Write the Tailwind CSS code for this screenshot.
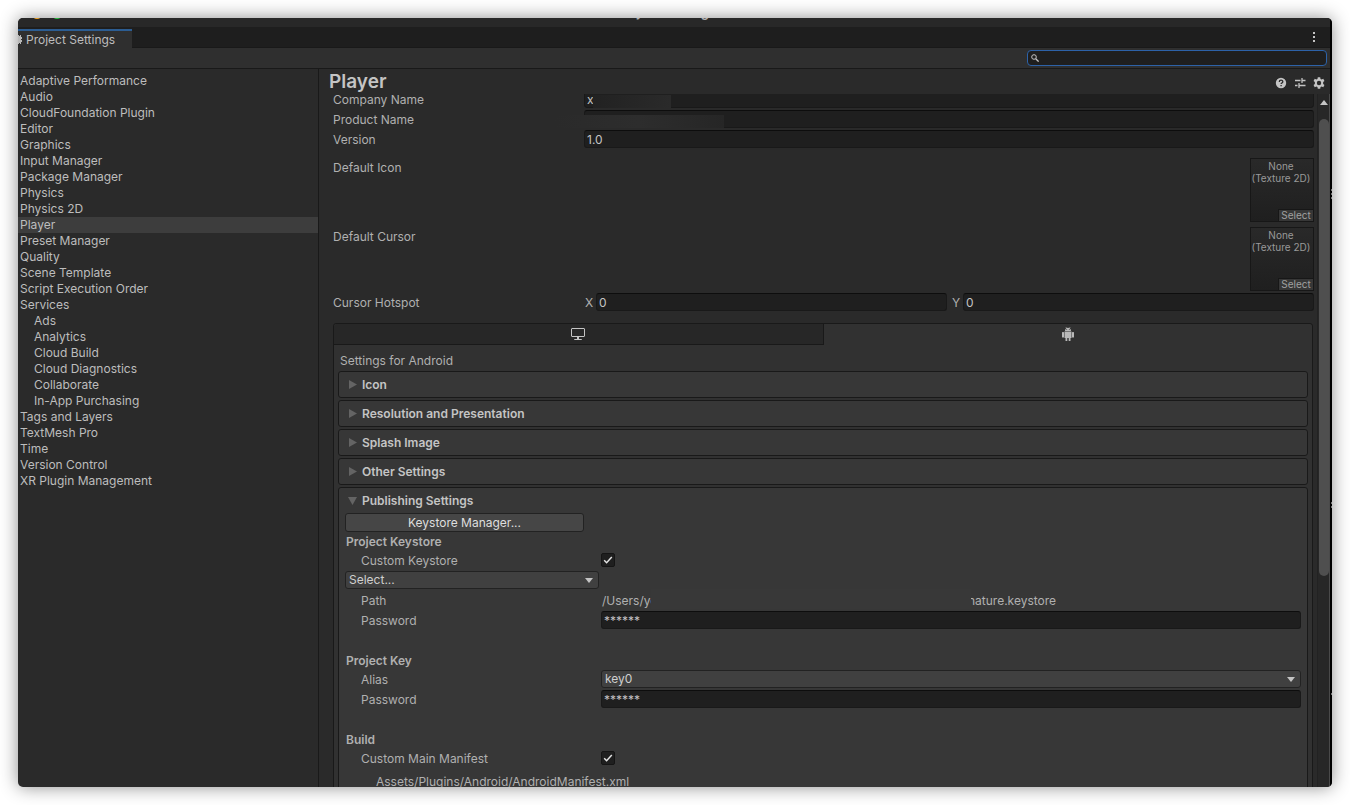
<!DOCTYPE html>
<html lang="en">
<head>
    <meta charset="UTF-8">
    <meta name="viewport" content="width=device-width, initial-scale=1.0">
    <title>Project Settings</title>
    <script src="https://cdn.jsdelivr.net/npm/@tailwindcss/browser@4"></script>
</head>

<body class="h-screen overflow-hidden bg-white p-[18px] font-['Inter',sans-serif] text-[12px] leading-4 text-[#b0b0b0]">
    <div class="relative flex h-full flex-col overflow-hidden rounded-[5px] bg-[#2a2a2a] pr-[2px] shadow-[0_0_18px_rgba(0,0,0,0.45)]">

        <!-- Title bar, scrolled almost out of view -->
        <div class="relative h-[9px] shrink-0 overflow-hidden bg-[#282828]">
            <span class="absolute -top-[11px] left-[13px] size-3 rounded-full bg-[#f5a623]"></span>
            <span class="absolute -top-[11px] left-[33px] size-3 rounded-full bg-[#28c840]"></span>
            <span class="absolute -top-[14px] left-1/2 -translate-x-1/2 pr-4 text-[13px] font-bold">Project Settings</span>
        </div>

        <!-- Tabs -->
        <div class="flex h-[21px] shrink-0 items-end justify-between border-b border-[#191919] bg-[#1e1e1e]">
            <div class="-mb-px flex h-[19px] w-[114px] items-center border-t-2 border-[#2c5d92] bg-[#2f2f2f] text-[#bdbdbd]">
                <svg class="mr-1 h-[9px] w-1 shrink-0" viewBox="0 0 4 9" fill="#b8b8b8"><path d="M0 0h1v1h1V0h1v2h1v2H3v1h1v2H3v2H2V8H1v1H0z"/></svg>
                <span>Project Settings</span>
            </div>
            <button type="button" aria-label="Menu" class="mr-2 flex h-full w-4 items-center justify-center">
                <svg class="h-[10px] w-[2px]" viewBox="0 0 2 10" fill="#c4c4c4"><path d="M0 0h2v2H0zM0 4h2v2H0zM0 8h2v2H0z"/></svg>
            </button>
        </div>

        <!-- Search -->
        <div class="flex h-[21px] shrink-0 items-center justify-end border-b border-[#191919] bg-[#2f2f2f] pr-[3px]">
            <label class="flex h-4 w-[300px] items-center rounded-[4px] border border-[#2d62a8] bg-[#1f1f1f] px-[3px]">
                <svg class="size-2 shrink-0" viewBox="0 0 8 8" fill="none" stroke="#c4c4c4"><circle cx="3" cy="3" r="2.3"/><path d="M4.7 4.7L7.6 7.6" stroke-width="1.3"/></svg>
                <input type="text" aria-label="Search settings" class="h-3 min-w-0 flex-1 bg-transparent px-1 outline-none">
            </label>
        </div>

        <div class="flex min-h-0 flex-1">
            <!-- Categories -->
            <nav class="w-[301px] shrink-0 border-r border-[#191919] pt-1 text-[#bdbdbd]">
                <a href="#" class="block pl-[2px]">Adaptive Performance</a>
                <a href="#" class="block pl-[2px]">Audio</a>
                <a href="#" class="block pl-[2px]">CloudFoundation Plugin</a>
                <a href="#" class="block pl-[2px]">Editor</a>
                <a href="#" class="block pl-[2px]">Graphics</a>
                <a href="#" class="block pl-[2px]">Input Manager</a>
                <a href="#" class="block pl-[2px]">Package Manager</a>
                <a href="#" class="block pl-[2px]">Physics</a>
                <a href="#" class="block pl-[2px]">Physics 2D</a>
                <a href="#" class="block bg-[#3d3d3d] pl-[2px]">Player</a>
                <a href="#" class="block pl-[2px]">Preset Manager</a>
                <a href="#" class="block pl-[2px]">Quality</a>
                <a href="#" class="block pl-[2px]">Scene Template</a>
                <a href="#" class="block pl-[2px]">Script Execution Order</a>
                <a href="#" class="block pl-[2px]">Services</a>
                <a href="#" class="block pl-4">Ads</a>
                <a href="#" class="block pl-4">Analytics</a>
                <a href="#" class="block pl-4">Cloud Build</a>
                <a href="#" class="block pl-4">Cloud Diagnostics</a>
                <a href="#" class="block pl-4">Collaborate</a>
                <a href="#" class="block pl-4">In-App Purchasing</a>
                <a href="#" class="block pl-[2px]">Tags and Layers</a>
                <a href="#" class="block pl-[2px]">TextMesh Pro</a>
                <a href="#" class="block pl-[2px]">Time</a>
                <a href="#" class="block pl-[2px]">Version Control</a>
                <a href="#" class="block pl-[2px]">XR Plugin Management</a>
            </nav>

            <main class="flex min-w-0 flex-1 flex-col">
                <header class="flex h-[25px] shrink-0 items-center justify-between pr-[5px] pl-[10px]">
                    <h1 class="text-[19px] leading-6 font-semibold text-[#c4c4c4]">Player</h1>
                    <div class="flex items-center gap-[7px] pt-[3px]">
                        <button type="button" aria-label="Help">
                            <svg class="size-3" viewBox="0 0 12 12"><circle cx="6" cy="6" r="5.2" fill="#c4c4c4"/><path d="M4.3 4.9c0-2.3 3.5-2.2 3.5-.2 0 1.200-1.700 1.300-1.700 2.400M6.100 8v1.300" fill="none" stroke="#2a2a2a" stroke-width="1.300"/></svg>
                        </button>
                        <button type="button" aria-label="Presets">
                            <svg class="size-3" viewBox="0 0 12 12" fill="none" stroke="#c4c4c4" stroke-width="1.300"><path d="M1 3.500h5.500M8 1v5M8 3.500h3.500M1 8.500h2.500M5 6v5M5 8.500h6.500"/></svg>
                        </button>
                        <button type="button" aria-label="Options">
                            <svg class="size-3" viewBox="0 0 11 11"><path d="M4.4 .3h2.200l.3 1.500 1 .5 1.500-.6 1.100 1.900-1.200 1v1.800l1.200 1-1.100 1.900-1.500-.6-1 .5-.3 1.500H4.400l-.3-1.500-1-.5-1.500.6L.5 7.400l1.200-1V4.600l-1.200-1 1.100-1.900 1.500.6 1-.5z" fill="#c4c4c4"/><circle cx="5.500" cy="5.500" r="2" fill="#2a2a2a"/></svg>
                        </button>
                    </div>
                </header>

                <div class="flex min-h-0 flex-1">
                    <div class="min-w-0 flex-1 overflow-hidden pr-[3px] pl-[14px]">
                        <!-- Product fields -->
                        <div class="-mt-1 flex flex-col gap-[2px]">
                            <div class="relative flex h-[18px] items-center">
                                <label for="company" class="w-[251px] shrink-0 pt-[2px]">Company Name</label>
                                <input id="company" type="text" value="x" class="h-[18px] min-w-0 flex-1 rounded-[3px] border border-[#191919] bg-[#1f1f1f] px-[2px] text-[#c4c4c4]">
                                <span class="absolute top-[5px] left-[260px] h-[13px] w-[78px] bg-linear-to-r from-[#222222] to-[#2a2a2a]"></span>
                            </div>
                            <div class="relative flex h-[18px] items-center">
                                <label for="product" class="w-[251px] shrink-0 pt-[2px]">Product Name</label>
                                <input id="product" type="text" class="h-[18px] min-w-0 flex-1 rounded-[3px] border border-[#191919] border-t-[#0d0d0d] bg-[#1f1f1f] px-[2px] text-[#c4c4c4]">
                                <span class="absolute top-[5px] left-[222px] h-[13px] w-[169px] bg-linear-to-r from-[#2a2a2a] via-[#2d2d2d] to-[#262626]"></span>
                            </div>
                            <div class="flex h-[18px] items-center">
                                <label for="version" class="w-[251px] shrink-0 pt-[2px]">Version</label>
                                <input id="version" type="text" value="1.0" class="h-[18px] min-w-0 flex-1 rounded-[3px] border border-[#191919] border-t-[#0d0d0d] bg-[#1f1f1f] px-[2px] text-[#c4c4c4]">
                            </div>
                        </div>

                        <!-- Textures -->
                        <div class="mt-[10px] flex justify-between">
                            <span class="pt-[2px]">Default Icon</span>
                            <div class="flex size-16 flex-col justify-between border border-[#171717] bg-linear-to-b from-[#292929] to-[#1f1f1f]">
                                <div class="pt-px pr-[2px] text-center text-[10px] leading-3 whitespace-nowrap text-[#999999]">None<br>(Texture 2D)</div>
                                <button type="button" class="h-3 w-[35px] self-end border-t border-l border-[#171717] bg-[#373737] text-[10px] leading-[11px] text-[#a0a0a0]">Select</button>
                            </div>
                        </div>
                        <div class="mt-[5px] flex justify-between">
                            <span class="pt-[2px]">Default Cursor</span>
                            <div class="flex size-16 flex-col justify-between border border-[#171717] bg-linear-to-b from-[#292929] to-[#1f1f1f]">
                                <div class="pt-px pr-[2px] text-center text-[10px] leading-3 whitespace-nowrap text-[#999999]">None<br>(Texture 2D)</div>
                                <button type="button" class="h-3 w-[35px] self-end border-t border-l border-[#171717] bg-[#373737] text-[10px] leading-[11px] text-[#a0a0a0]">Select</button>
                            </div>
                        </div>
                        <div class="mt-[2px] flex h-[18px] items-center">
                            <span class="w-[252px] shrink-0 pt-[2px]">Cursor Hotspot</span>
                            <label for="hotspotX" class="w-[11px] shrink-0 pt-[2px]">X</label>
                            <input id="hotspotX" type="text" value="0" class="h-[18px] min-w-0 flex-1 rounded-[3px] border border-[#191919] border-t-[#0d0d0d] bg-[#1f1f1f] px-[2px] text-[#c4c4c4]">
                            <label for="hotspotY" class="ml-[5px] w-[11px] shrink-0 pt-[2px]">Y</label>
                            <input id="hotspotY" type="text" value="0" class="h-[18px] min-w-0 flex-1 rounded-[3px] border border-[#191919] border-t-[#0d0d0d] bg-[#1f1f1f] px-[2px] text-[#c4c4c4]">
                        </div>

                        <!-- Platform settings -->
                        <div class="mt-3 mr-px rounded-t-[3px] border border-[#191919] bg-[#313131]">
                            <div class="flex h-[21px]">
                                <button type="button" aria-label="Desktop" class="flex flex-1 items-center justify-center rounded-tl-[3px] border-r border-b border-[#191919] bg-[#272727]">
                                    <svg class="h-3 w-[14px]" viewBox="0 0 14 12" fill="#c4c4c4"><path fill-rule="evenodd" d="M1 0h12l1 1v7l-1 1H8v2h2.500l.5.5-.5.5h-7L3 11.500l.5-.5H6V9H1L0 8V1zM1 1v7h12V1z"/></svg>
                                </button>
                                <button type="button" aria-label="Android" class="flex flex-1 items-center justify-center border-b border-transparent">
                                    <svg class="h-[14px] w-3" viewBox="0 0 12 14" fill="#b8b8b8"><path fill-rule="evenodd" d="M3 4c0-1.300.6-2.200 1.400-2.700L3.500.2l.4-.2 1 1a3.500 3.500 0 0 1 2.200 0l1-1 .4.2-.9 1.100C8.400 1.800 9 2.700 9 4zM4.300 2.200v.8h.8v-.8zM6.900 2.200v.8h.8v-.8z"/><path d="M2.500 4.500h7V11h-1v3H6.700v-3H5.300v3H3.500v-3h-1z"/><rect x="0" y="5" width="2" height="5.500" rx=".5"/><rect x="10" y="5" width="2" height="5.500" rx=".5"/></svg>
                                </button>
                            </div>
                            <p class="mt-2 mb-[2px] pl-[6px]">Settings for Android</p>

                            <div class="flex flex-col gap-[2px] px-1 font-semibold text-[#c4c4c4]">
                                <button type="button" class="flex h-[27px] items-center rounded-[3px] border border-[#191919] bg-[#373737] pl-[10px]">
                                    <svg class="mr-[5px] h-[9px] w-2" viewBox="0 0 8 9" fill="#646464"><path d="M0 0l8 4.500L0 9z"/></svg>
                                    Icon
                                </button>
                                <button type="button" class="flex h-[27px] items-center rounded-[3px] border border-[#191919] bg-[#373737] pl-[10px]">
                                    <svg class="mr-[5px] h-[9px] w-2" viewBox="0 0 8 9" fill="#646464"><path d="M0 0l8 4.500L0 9z"/></svg>
                                    Resolution and Presentation
                                </button>
                                <button type="button" class="flex h-[27px] items-center rounded-[3px] border border-[#191919] bg-[#373737] pl-[10px]">
                                    <svg class="mr-[5px] h-[9px] w-2" viewBox="0 0 8 9" fill="#646464"><path d="M0 0l8 4.500L0 9z"/></svg>
                                    Splash Image
                                </button>
                                <button type="button" class="flex h-[27px] items-center rounded-[3px] border border-[#191919] bg-[#373737] pl-[10px]">
                                    <svg class="mr-[5px] h-[9px] w-2" viewBox="0 0 8 9" fill="#646464"><path d="M0 0l8 4.500L0 9z"/></svg>
                                    Other Settings
                                </button>
                            </div>

                            <!-- Publishing settings -->
                            <section class="mx-1 mt-[2px] h-[420px] rounded-[3px] border border-[#191919] bg-[#373737] px-[6px]">
                                <button type="button" class="flex h-[25px] items-center pl-[3px] font-semibold text-[#c4c4c4]">
                                    <svg class="mr-[5px] h-2 w-[9px]" viewBox="0 0 9 8" fill="#646464"><path d="M0 0h9L4.500 8z"/></svg>
                                    Publishing Settings
                                </button>
                                <button type="button" class="block h-[19px] w-[239px] rounded-[3px] border border-[#222222] bg-[#464646] text-[#dedede]">Keystore Manager...</button>

                                <h2 class="mt-[2px] pl-px font-semibold">Project Keystore</h2>
                                <div class="mt-px mb-[3px] flex h-[17px] items-center">
                                    <label for="customKeystore" class="w-[256px] shrink-0 pt-[2px] pl-4">Custom Keystore</label>
                                    <span class="relative size-[14px]">
                                        <input id="customKeystore" type="checkbox" checked class="block size-[14px] appearance-none rounded-[2px] border border-[#151515] bg-[#1f1f1f]">
                                        <svg class="pointer-events-none absolute inset-0" viewBox="0 0 14 14" fill="none" stroke="#e4e4e4" stroke-width="1.500"><path d="M3.200 7.300l2.400 2.400 5.200-5.600"/></svg>
                                    </span>
                                </div>
                                <div class="relative h-[18px] w-[254px]">
                                    <select aria-label="Keystore" class="block h-[18px] w-full appearance-none rounded-[3px] border border-[#222222] bg-[#404040] px-[3px] leading-4 text-[#cfcfcf]">
                                        <option>Select...</option>
                                    </select>
                                    <svg class="pointer-events-none absolute top-[7px] right-[6px] h-[5px] w-2" viewBox="0 0 8 5" fill="#c4c4c4"><path d="M0 0h8L4 5z"/></svg>
                                </div>
                                <div class="relative mt-[2px] flex h-5 items-center">
                                    <span class="w-[257px] shrink-0 pl-4">Path</span>
                                    <span class="w-[366px] shrink-0">/Users/yo</span>
                                    <span>nature.keystore</span>
                                    <span class="absolute -top-[2px] left-[306px] h-5 w-[320px] bg-[#383838]"></span>
                                </div>
                                <div class="flex h-[18px] items-center">
                                    <label for="storePassword" class="w-[256px] shrink-0 pt-[2px] pl-4">Password</label>
                                    <input id="storePassword" type="text" value="******" autocomplete="off" class="h-[18px] min-w-0 flex-1 rounded-[3px] border border-[#191919] border-t-[#0d0d0d] bg-[#1f1f1f] px-[2px] text-[#c4c4c4]">
                                </div>

                                <h2 class="mt-6 pl-px font-semibold">Project Key</h2>
                                <div class="mt-px flex h-[18px] items-center">
                                    <label for="alias" class="w-[256px] shrink-0 pt-[2px] pl-4">Alias</label>
                                    <div class="relative min-w-0 flex-1">
                                        <select id="alias" class="block h-[18px] w-full appearance-none rounded-[3px] border border-[#222222] bg-[#404040] px-[3px] leading-4 text-[#cfcfcf]">
                                            <option>key0</option>
                                        </select>
                                        <svg class="pointer-events-none absolute top-[7px] right-[6px] h-[5px] w-2" viewBox="0 0 8 5" fill="#c4c4c4"><path d="M0 0h8L4 5z"/></svg>
                                    </div>
                                </div>
                                <div class="mt-[2px] flex h-[18px] items-center">
                                    <label for="keyPassword" class="w-[256px] shrink-0 pt-[2px] pl-4">Password</label>
                                    <input id="keyPassword" type="text" value="******" autocomplete="off" class="h-[18px] min-w-0 flex-1 rounded-[3px] border border-[#191919] border-t-[#0d0d0d] bg-[#1f1f1f] px-[2px] text-[#c4c4c4]">
                                </div>

                                <h2 class="mt-6 pl-px font-semibold">Build</h2>
                                <div class="mt-px flex h-[17px] items-center">
                                    <label for="customManifest" class="w-[256px] shrink-0 pt-[2px] pl-4">Custom Main Manifest</label>
                                    <span class="relative size-[14px]">
                                        <input id="customManifest" type="checkbox" checked class="block size-[14px] appearance-none rounded-[2px] border border-[#151515] bg-[#1f1f1f]">
                                        <svg class="pointer-events-none absolute inset-0" viewBox="0 0 14 14" fill="none" stroke="#e4e4e4" stroke-width="1.500"><path d="M3.200 7.300l2.400 2.400 5.200-5.600"/></svg>
                                    </span>
                                </div>
                                <p class="mt-2 pl-[31px]">Assets/Plugins/Android/AndroidManifest.xml</p>
                            </section>
                        </div>
                    </div>

                    <!-- Scrollbar -->
                    <div class="flex w-[13px] shrink-0 flex-col items-center border-r border-l border-r-[#4a4a4a] border-l-[#222222] bg-[#272727] pt-[6px]">
                        <svg class="h-[5px] w-2 shrink-0" viewBox="0 0 8 5" fill="#c4c4c4"><path d="M0 5h8L4 0z"/></svg>
                        <div class="mt-[14px] h-[457px] w-[10px] shrink-0 rounded-full bg-[#4f4f4f]"></div>
                    </div>
                </div>
            </main>
        </div>

        <!-- Sliver of the window behind -->
        <div class="absolute inset-y-0 right-0 w-[2px] bg-black">
            <span class="absolute top-[171px] right-0 h-[2px] w-px bg-[#777777]"></span>
            <span class="absolute top-[175px] right-0 h-[2px] w-px bg-[#777777]"></span>
            <span class="absolute top-[179px] right-0 h-[2px] w-px bg-[#777777]"></span>
            <span class="absolute top-[484px] right-0 h-[2px] w-px bg-[#777777]"></span>
            <span class="absolute top-[488px] right-0 h-[2px] w-px bg-[#777777]"></span>
            <span class="absolute top-[675px] right-0 h-[2px] w-px bg-[#777777]"></span>
        </div>
    </div>
</body>
</html>
